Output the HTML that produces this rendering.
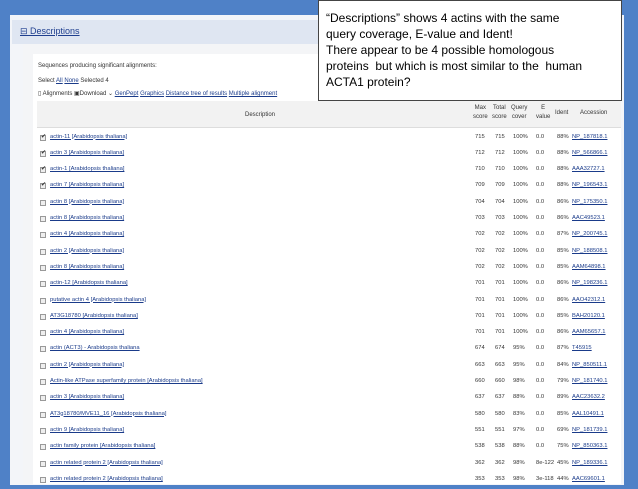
<!DOCTYPE html><html><head><style>
*{margin:0;padding:0;box-sizing:border-box}
body{width:638px;height:478px;overflow:hidden;background:#4f81c7;font-family:"Liberation Sans",sans-serif;position:relative}
.panel{position:absolute;left:10px;top:15px;width:614px;height:470px;background:#f3f5f9}
.hdr{position:absolute;left:12px;top:20px;width:608px;height:24px;background:#dfe6f2}
.hdr span{position:absolute;left:8px;top:6px;font-size:9px;color:#1f3f8f;text-decoration:underline}
.inner{position:absolute;left:23px;top:44px;width:597px;height:440px;background:#f4f5f7}
.box{position:absolute;left:33px;top:54px;width:588px;height:430px;background:#fff}
.t{position:absolute;font-size:6px;color:#333;white-space:nowrap}
.th{position:absolute;left:37px;top:101px;width:584px;height:27px;background:#f2f2f2;border-bottom:1px solid #ddd}
.row{position:absolute;left:37px;width:584px;height:16px;font-size:5.8px;color:#333}
.row .cb{position:absolute;left:3px;top:4px;width:6px;height:6px;border:1px solid #999;background:#eee}
.row .d{position:absolute;left:13px;top:3px;color:#1a3b8a;text-decoration:underline;white-space:nowrap}
.row span{position:absolute;top:3px}
.call{position:absolute;left:318px;top:0;width:304px;height:101px;background:#fff;border:1px solid #444;font-size:12px;line-height:16px;color:#000;padding:9px 7px;white-space:nowrap}
</style></head><body>
<div class="panel"></div>
<div class="hdr"><span>⊟ Descriptions</span></div>
<div class="inner"></div>
<div class="box"></div>
<div class="t" style="left:38px;top:63px">Sequences producing significant alignments:</div>
<div class="t" style="left:38px;top:78px">Select <u style="color:#1a3b8a">All</u> <u style="color:#1a3b8a">None</u> Selected 4</div>
<div class="t" style="left:38px;top:90px">▯ Alignments ▣Download ⌄ <u style="color:#1a3b8a">GenPept</u> <u style="color:#1a3b8a">Graphics</u> <u style="color:#1a3b8a">Distance tree of results</u> <u style="color:#1a3b8a">Multiple alignment</u></div>
<div class="th"></div>
<div class="t" style="left:245px;top:112px">Description</div>
<div class="t" style="left:473px;top:104px;line-height:9px;text-align:center">Max<br>score</div>
<div class="t" style="left:492px;top:104px;line-height:9px;text-align:center">Total<br>score</div>
<div class="t" style="left:511px;top:104px;line-height:9px;text-align:center">Query<br>cover</div>
<div class="t" style="left:536px;top:104px;line-height:9px;text-align:center">E<br>value</div>
<div class="t" style="left:555px;top:110px">Ident</div>
<div class="t" style="left:580px;top:110px">Accession</div>
<div id="rows"></div>
<div class="call">“Descriptions” shows 4 actins with the same<br>query coverage, E-value and Ident!<br>There appear to be 4 possible homologous<br>proteins&nbsp; but which is most similar to the&nbsp; human<br>ACTA1 protein?</div>
<script>
var d=[["actin-11 [Arabidopsis thaliana]",715,715,"100%","0.0","88%","NP_187818.1",1],
["actin 3 [Arabidopsis thaliana]",712,712,"100%","0.0","88%","NP_566866.1",1],
["actin-1 [Arabidopsis thaliana]",710,710,"100%","0.0","88%","AAA32727.1",1],
["actin 7 [Arabidopsis thaliana]",709,709,"100%","0.0","88%","NP_196543.1",1],
["actin 8 [Arabidopsis thaliana]",704,704,"100%","0.0","86%","NP_175350.1"],
["actin 8 [Arabidopsis thaliana]",703,703,"100%","0.0","86%","AAC49523.1"],
["actin 4 [Arabidopsis thaliana]",702,702,"100%","0.0","87%","NP_200745.1"],
["actin 2 [Arabidopsis thaliana]",702,702,"100%","0.0","85%","NP_188508.1"],
["actin 8 [Arabidopsis thaliana]",702,702,"100%","0.0","85%","AAM64898.1"],
["actin-12 [Arabidopsis thaliana]",701,701,"100%","0.0","86%","NP_198236.1"],
["putative actin 4 [Arabidopsis thaliana]",701,701,"100%","0.0","86%","AAO42312.1"],
["AT3G18780 [Arabidopsis thaliana]",701,701,"100%","0.0","85%","BAH20120.1"],
["actin 4 [Arabidopsis thaliana]",701,701,"100%","0.0","86%","AAM65657.1"],
["actin (ACT3) - Arabidopsis thaliana",674,674,"95%","0.0","87%","T45915"],
["actin 2 [Arabidopsis thaliana]",663,663,"95%","0.0","84%","NP_850511.1"],
["Actin-like ATPase superfamily protein [Arabidopsis thaliana]",660,660,"98%","0.0","79%","NP_181740.1"],
["actin 3 [Arabidopsis thaliana]",637,637,"88%","0.0","89%","AAC23632.2"],
["AT3g18780/MVE11_16 [Arabidopsis thaliana]",580,580,"83%","0.0","85%","AAL10491.1"],
["actin 9 [Arabidopsis thaliana]",551,551,"97%","0.0","69%","NP_181739.1"],
["actin family protein [Arabidopsis thaliana]",538,538,"88%","0.0","75%","NP_850363.1"],
["actin related protein 2 [Arabidopsis thaliana]",362,362,"98%","8e-122","45%","NP_189336.1"],
["actin related protein 2 [Arabidopsis thaliana]",353,353,"98%","3e-118","44%","AAC69601.1"]];
var h="";d.forEach(function(r,i){var y=130.5+i*16.3;
h+='<div class="row" style="top:'+y+'px"><div class="cb">'+(r[7]?'<span style="top:-3px;left:0;font-size:6px">✔</span>':'')+'</div><div class="d">'+r[0]+'</div><span style="left:438px">'+r[1]+'</span><span style="left:458px">'+r[2]+'</span><span style="left:476px">'+r[3]+'</span><span style="left:499px">'+r[4]+'</span><span style="left:520px">'+r[5]+'</span><span style="left:535px;color:#1a3b8a;text-decoration:underline">'+r[6]+'</span></div>';});
document.getElementById("rows").innerHTML=h;
</script>
</body></html>
